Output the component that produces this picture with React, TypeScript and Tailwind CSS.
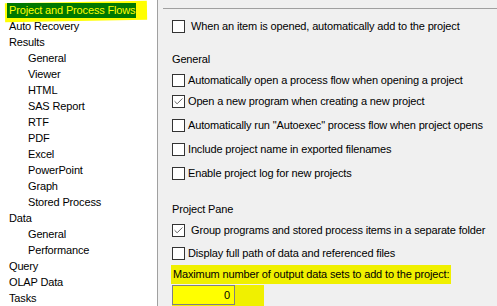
import { Check } from "lucide-react";

const navItems: { label: string; indent?: boolean }[] = [
  { label: "Auto Recovery" },
  { label: "Results" },
  { label: "General", indent: true },
  { label: "Viewer", indent: true },
  { label: "HTML", indent: true },
  { label: "SAS Report", indent: true },
  { label: "RTF", indent: true },
  { label: "PDF", indent: true },
  { label: "Excel", indent: true },
  { label: "PowerPoint", indent: true },
  { label: "Graph", indent: true },
  { label: "Stored Process", indent: true },
  { label: "Data" },
  { label: "General", indent: true },
  { label: "Performance", indent: true },
  { label: "Query" },
  { label: "OLAP Data" },
  { label: "Tasks" },
];

function Box({ checked }: { checked?: boolean }) {
  return (
    <span className="w-[13px] h-[13px] shrink-0 border border-[#333333] bg-white flex items-center justify-center">
      {checked && <Check className="w-[11px] h-[11px] text-[#555555]" strokeWidth={2} />}
    </span>
  );
}

function Row({ label, checked, gap = "gap-[3px]", className = "" }: { label: string; checked?: boolean; gap?: string; className?: string }) {
  return (
    <div className={`flex items-center h-[13px] ${gap} ${className}`}>
      <Box checked={checked} />
      <span className="leading-none whitespace-nowrap">{label}</span>
    </div>
  );
}

export default function App() {
  return (
    <div className="w-[497px] h-[306px] flex overflow-hidden text-[11px] tracking-[-0.15px] text-black" style={{ fontFamily: '"Liberation Sans", Arial, sans-serif' }}>
      <div className="relative w-[158px] shrink-0 bg-white border-r border-[#a0a0a0] pt-[2px]">
        <div className="absolute left-[5px] top-[2px] w-[142px] h-[19px] bg-[#ffff00] -rotate-1" />
        <div className="relative h-[16px] flex items-center">
          <span className="ml-[7px] px-[2px] h-[15px] w-[129px] flex items-center whitespace-nowrap bg-[#007800] text-[#ffff00]">Project and Process Flows</span>
        </div>
        {navItems.map((item, i) => (
          <div key={i} className={`h-[16px] flex items-center whitespace-nowrap ${item.indent ? "pl-[28px]" : "pl-[9px]"}`}>
            {item.label}
          </div>
        ))}
      </div>

      <div className="flex-1 bg-[#f0f0f0] pl-[14px]">
        <div className="ml-[-9px] mt-[8px] border-t border-[#a0a0a0]" />
        <Row label="When an item is opened, automatically add to the project" gap="gap-[6px]" className="mt-[11px]" />

        <div className="mt-[20px] h-[13px] flex items-center">General</div>

        <Row label="Automatically open a process flow when opening a project" className="mt-[8px]" />
        <Row label="Open a new program when creating a new project" checked className="mt-[8px]" />
        <Row label={'Automatically run "Autoexec" process flow when project opens'} className="mt-[11px]" />
        <Row label="Include project name in exported filenames" className="mt-[11px]" />
        <Row label="Enable project log for new projects" className="mt-[11px]" />

        <div className="mt-[23px] h-[13px] flex items-center">Project Pane</div>
        <Row label="Group programs and stored process items in a separate folder" checked gap="gap-[6px]" className="mt-[8px]" />
        <Row label="Display full path of data and referenced files" className="mt-[10px]" />

        <div className="relative mt-[5px] ml-[-1px]">
          <div className="inline-flex items-center h-[19px] px-[2px] bg-[#f0f000]">
            Maximum number of output data sets to add to the project:
          </div>
        </div>
        <div className="relative mt-[1px] h-[21px] w-[92px] bg-[#f0f000]">
          <div className="w-[63px] h-[20px] border border-[#808080] bg-[#ffff00] flex items-center justify-end pr-[4px]">0</div>
        </div>
      </div>
    </div>
  );
}
